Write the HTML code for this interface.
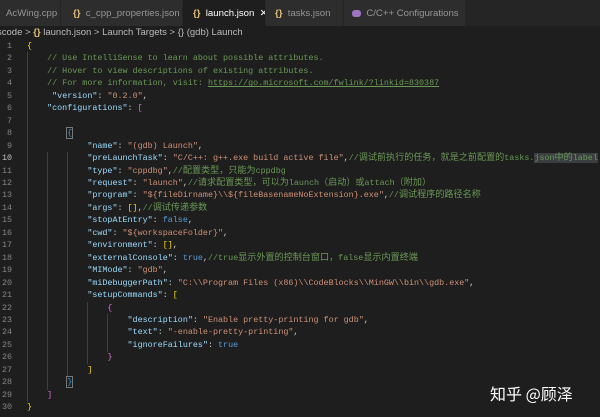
<!DOCTYPE html>
<html><head><meta charset="utf-8"><style>
body{margin:0;width:600px;height:417px;background:#1e1e1e;overflow:hidden;font-family:"Liberation Sans","Noto Sans CJK SC",sans-serif;position:relative}
.tabs{position:absolute;left:0;top:0;width:600px;height:26px;background:#252526}
.tab{position:absolute;top:0;height:26px;line-height:27px;font-size:9.6px;color:#969696;background:#2d2d2d;border-right:1px solid #252526;box-sizing:border-box;padding-left:6px;white-space:nowrap;overflow:hidden}
.tab.act{background:#1e1e1e;color:#fff}
.br{color:#e5c07b;font-weight:bold}
.crumb{position:absolute;top:26px;height:14px;line-height:13px;font-size:9.5px;color:#bbb;white-space:nowrap;left:-3px}
.ln{position:absolute;left:-14px;width:26px;text-align:right;color:#858585;top:40px;font-family:"Liberation Mono",monospace;font-size:8.4px;line-height:12.45px;white-space:pre}
.c{position:absolute;left:27px;top:40px;font-family:"Liberation Mono","Noto Sans CJK SC",monospace;font-size:8.4px;line-height:12.45px;white-space:pre;color:#d4d4d4}
.k{color:#9cdcfe}.s{color:#ce9178}.m{color:#6a9955}.b{color:#569cd6}.y{color:#ffd700}.p{color:#da70d6}.u{color:#179fff}
.z{font-size:9.1px}
.g{position:absolute;width:1px;background:#404040}
</style></head><body>
<div class="tabs">
<div class="tab" style="left:0;width:61px">AcWing.cpp</div>
<div class="tab" style="left:61px;width:122px;padding-left:12px"><span class="br">{}</span>&nbsp; c_cpp_properties.json</div>
<div class="tab act" style="left:183px;width:83px;padding-left:10px"><span class="br">{}</span>&nbsp; launch.json&nbsp; ✕</div>
<div class="tab" style="left:266px;width:78px;padding-left:9px"><span class="br">{}</span>&nbsp; tasks.json</div>
<div class="tab" style="left:344px;width:122px;padding-left:8px"><span style="display:inline-block;width:9px;height:7px;border-radius:3px;background:#a074c4;vertical-align:-1px"></span>&nbsp; C/C++ Configurations</div>
</div>
<div class="crumb">scode &gt; <span class="br">{}</span> launch.json &gt; Launch Targets &gt; {} (gdb) Launch</div>
<div class="g" style="left:27px;top:52px;height:350px"></div>
<div class="g" style="left:47px;top:152px;height:238px"></div>
<div class="g" style="left:67px;top:152px;height:225px"></div>
<div class="g" style="left:87px;top:302px;height:62px"></div>
<div class="g" style="left:107px;top:314px;height:38px"></div>
<div class="ln">1
2
3
4
5
6
7
8
9
<span style="color:#c6c6c6">10</span>
11
12
13
14
15
16
17
18
19
20
21
22
23
24
25
26
27
28
29
30</div>
<div class="c"><span class="y">{</span>
    <span class="m">// Use IntelliSense to learn about possible attributes.</span>
    <span class="m">// Hover to view descriptions of existing attributes.</span>
    <span class="m">// For more information, visit: <u>https://go.microsoft.com/fwlink/?linkid=830387</u></span>
     <span class="k">"version"</span>: <span class="s">"0.2.0"</span>,
    <span class="k">"configurations"</span>: <span class="p">[</span>

        <span class="u" style="outline:1px solid #777">{</span>
            <span class="k">"name"</span>: <span class="s">"(gdb) Launch"</span>,
            <span class="k">"preLaunchTask"</span>: <span class="s">"C/C++: g++.exe build active file"</span>,<span class="m">//<span class="z">调试前执行的任务，就是之前配置的</span>tasks.<span style="background:#3a3d41">json<span class="z">中的</span>label</span></span>
            <span class="k">"type"</span>: <span class="s">"cppdbg"</span>,<span class="m">//<span class="z">配置类型，只能为</span>cppdbg</span>
            <span class="k">"request"</span>: <span class="s">"launch"</span>,<span class="m">//<span class="z">请求配置类型，可以为</span>launch<span class="z">（启动）或</span>attach<span class="z">（附加）</span></span>
            <span class="k">"program"</span>: <span class="s">"${fileDirname}\\${fileBasenameNoExtension}.exe"</span>,<span class="m">//<span class="z">调试程序的路径名称</span></span>
            <span class="k">"args"</span>: <span class="y">[]</span>,<span class="m">//<span class="z">调试传递参数</span></span>
            <span class="k">"stopAtEntry"</span>: <span class="b">false</span>,
            <span class="k">"cwd"</span>: <span class="s">"${workspaceFolder}"</span>,
            <span class="k">"environment"</span>: <span class="y">[]</span>,
            <span class="k">"externalConsole"</span>: <span class="b">true</span>,<span class="m">//true<span class="z">显示外置的控制台窗口，</span>false<span class="z">显示内置终端</span></span>
            <span class="k">"MIMode"</span>: <span class="s">"gdb"</span>,
            <span class="k">"miDebuggerPath"</span>: <span class="s">"C:\\Program Files (x86)\\CodeBlocks\\MinGW\\bin\\gdb.exe"</span>,
            <span class="k">"setupCommands"</span>: <span class="y">[</span>
                <span class="p">{</span>
                    <span class="k">"description"</span>: <span class="s">"Enable pretty-printing for gdb"</span>,
                    <span class="k">"text"</span>: <span class="s">"-enable-pretty-printing"</span>,
                    <span class="k">"ignoreFailures"</span>: <span class="b">true</span>
                <span class="p">}</span>
            <span class="y">]</span>
        <span class="u" style="outline:1px solid #777">}</span>
    <span class="p">]</span>
<span class="y">}</span></div>
<div style="position:absolute;left:490px;top:381px;font-size:16px;color:#fff;font-family:'Noto Sans CJK SC',sans-serif">知乎 @顾泽</div>
</body></html>
